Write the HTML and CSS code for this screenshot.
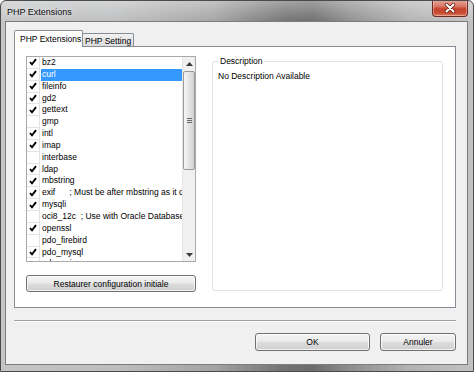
FILE: index.html
```html
<!DOCTYPE html>
<html>
<head>
<meta charset="utf-8">
<link rel="stylesheet" href="styles.css">
</head>
<body>
<div class="window">
  <div class="titlebar">
    <span class="title">PHP Extensions</span>
    <span class="close"><svg width="12" height="10" viewBox="0 0 12 10"><path d="M2.5 1.5 L9.5 8.5 M9.5 1.5 L2.5 8.5" stroke="#5a1a10" stroke-width="3.4" stroke-linecap="round"/><path d="M2.5 1.5 L9.5 8.5 M9.5 1.5 L2.5 8.5" stroke="#fff" stroke-width="2" stroke-linecap="round"/></svg></span>
  </div>
  <div class="client">
    <div class="tabs">
      <div class="tab active">PHP Extensions</div>
      <div class="tab inactive">PHP Setting</div>
    </div>
    <div class="panel">
      <div class="leftcol">
        <div class="list">
          <div class="items">
            <div class="row"><span class="cb"><svg class="chk" viewBox="0 0 8 8"><path d="M1 4 L3 6.3 L7 1.2" /></svg></span><span class="lbl">bz2</span></div>
            <div class="row sel"><span class="cb"><svg class="chk" viewBox="0 0 8 8"><path d="M1 4 L3 6.3 L7 1.2" /></svg></span><span class="lbl">curl</span></div>
            <div class="row"><span class="cb"><svg class="chk" viewBox="0 0 8 8"><path d="M1 4 L3 6.3 L7 1.2" /></svg></span><span class="lbl">fileinfo</span></div>
            <div class="row"><span class="cb"><svg class="chk" viewBox="0 0 8 8"><path d="M1 4 L3 6.3 L7 1.2" /></svg></span><span class="lbl">gd2</span></div>
            <div class="row"><span class="cb"><svg class="chk" viewBox="0 0 8 8"><path d="M1 4 L3 6.3 L7 1.2" /></svg></span><span class="lbl">gettext</span></div>
            <div class="row"><span class="cb"></span><span class="lbl">gmp</span></div>
            <div class="row"><span class="cb"><svg class="chk" viewBox="0 0 8 8"><path d="M1 4 L3 6.3 L7 1.2" /></svg></span><span class="lbl">intl</span></div>
            <div class="row"><span class="cb"><svg class="chk" viewBox="0 0 8 8"><path d="M1 4 L3 6.3 L7 1.2" /></svg></span><span class="lbl">imap</span></div>
            <div class="row"><span class="cb"></span><span class="lbl">interbase</span></div>
            <div class="row"><span class="cb"><svg class="chk" viewBox="0 0 8 8"><path d="M1 4 L3 6.3 L7 1.2" /></svg></span><span class="lbl">ldap</span></div>
            <div class="row"><span class="cb"><svg class="chk" viewBox="0 0 8 8"><path d="M1 4 L3 6.3 L7 1.2" /></svg></span><span class="lbl">mbstring</span></div>
            <div class="row"><span class="cb"><svg class="chk" viewBox="0 0 8 8"><path d="M1 4 L3 6.3 L7 1.2" /></svg></span><span class="lbl">exif      ; Must be after mbstring as it depends on it</span></div>
            <div class="row"><span class="cb"><svg class="chk" viewBox="0 0 8 8"><path d="M1 4 L3 6.3 L7 1.2" /></svg></span><span class="lbl">mysqli</span></div>
            <div class="row"><span class="cb"></span><span class="lbl">oci8_12c  ; Use with Oracle Database 12c Instant Client</span></div>
            <div class="row"><span class="cb"><svg class="chk" viewBox="0 0 8 8"><path d="M1 4 L3 6.3 L7 1.2" /></svg></span><span class="lbl">openssl</span></div>
            <div class="row"><span class="cb"></span><span class="lbl">pdo_firebird</span></div>
            <div class="row"><span class="cb"><svg class="chk" viewBox="0 0 8 8"><path d="M1 4 L3 6.3 L7 1.2" /></svg></span><span class="lbl">pdo_mysql</span></div>
            <div class="row"><span class="cb"></span><span class="lbl">pdo_oci</span></div>
          </div>
          <div class="scrollbar">
            <div class="arrow"><svg width="7" height="4" viewBox="0 0 7 4"><path d="M0 4 L3.5 0 L7 4 Z" fill="#3c3c3c"/></svg></div>
            <div class="thumb"><span class="grip"></span><span class="grip"></span><span class="grip"></span></div>
            <div class="track"></div>
            <div class="arrow"><svg width="7" height="4" viewBox="0 0 7 4"><path d="M0 0 L3.5 4 L7 0 Z" fill="#3c3c3c"/></svg></div>
          </div>
        </div>
        <button class="btn restore">Restaurer configuration initiale</button>
      </div>
      <fieldset class="desc">
        <legend>Description</legend>
        <div class="desctext">No Description Available</div>
      </fieldset>
    </div>
    <div class="sep"></div>
    <div class="actions">
      <button class="btn ok">OK</button>
      <button class="btn cancel">Annuler</button>
    </div>
  </div>
</div>
</body>
</html>
```
FILE: styles.css
```css
html, body {
  margin: 0;
  padding: 0;
  background: #ffffff;
}
body {
  font-family: "Liberation Sans", Arial, sans-serif;
  font-size: 8.5px;
  color: #000;
}
.window {
  width: 474px;
  height: 372px;
  box-sizing: border-box;
  border: 1px solid #4b4b4b;
  border-radius: 6px 6px 0 0;
  background:
    linear-gradient(to bottom, rgba(255,255,255,0.35), rgba(255,255,255,0) 22px),
    linear-gradient(to right, #c3c5c7 0%, #bcbdbe 25%, #a3a3a3 45%, #727272 60%, #6c6c6c 66%, #8e8e8e 74%, #b1b1b1 86%, #c2c2c2 100%);
  padding: 0 5px 6px 4px;
  display: flex;
  flex-direction: column;
  overflow: hidden;
}
.titlebar {
  height: 20px;
  display: flex;
  justify-content: space-between;
  align-items: flex-start;
}
.title {
  font-size: 9px;
  padding: 6px 0 0 2px;
  color: #111;
  text-shadow: 0 0 6px rgba(255,255,255,0.9);
}
.close {
  margin-top: -1px;
  width: 36px;
  height: 17px;
  box-sizing: border-box;
  border: 1px solid #6d2a22;
  border-top: none;
  border-radius: 0 0 4px 4px;
  background: linear-gradient(to bottom, #e9a89d 0%, #d77563 40%, #c7442e 55%, #c84a32 80%, #dc7a5e 100%);
  display: flex;
  align-items: center;
  justify-content: center;
  box-shadow: inset 0 0 0 1px rgba(255,255,255,0.35);
}
.client {
  flex: 1;
  background: #f0f0f0;
  border: 1px solid #7c7c7c;
  display: flex;
  flex-direction: column;
}
.tabs {
  display: flex;
  align-items: flex-end;
  height: 17px;
  margin: 8px 0 -1px 8px;
}
.tab {
  box-sizing: border-box;
  border: 1px solid #898c95;
  border-bottom: none;
  border-radius: 2px 2px 0 0;
  white-space: nowrap;
}
.tab.active {
  position: relative;
  z-index: 1;
  width: 69px;
  height: 17px;
  background: #fff;
  padding: 3px 0 0 5px;
}
.tab.inactive {
  width: 52px;
  height: 13px;
  margin-bottom: 1px;
  margin-left: -1px;
  border-left: none;
  background: linear-gradient(to bottom, #f3f3f3, #e6e6e6 50%, #dcdcdc);
  padding: 2px 0 0 3px;
}
.panel {
  width: 442px;
  height: 262px;
  margin-left: 8px;
  box-sizing: border-box;
  border: 1px solid #898c95;
  background: #fff;
  display: flex;
  padding: 9px 0 0 11px;
  gap: 16px;
}
.leftcol {
  display: flex;
  flex-direction: column;
  width: 170px;
}
.list {
  height: 206px;
  box-sizing: border-box;
  border: 1px solid #a9a9a9;
  display: flex;
  overflow: hidden;
}
.items {
  flex: 1;
  min-width: 0;
  overflow: hidden;
}
.row {
  display: flex;
  height: 11.85px;
}
.cb {
  flex: none;
  width: 13px;
  box-sizing: border-box;
  border-right: 1px solid #e3e3e3;
  border-bottom: 1px solid #e3e3e3;
  display: flex;
  align-items: center;
  justify-content: center;
}
.chk {
  width: 8px;
  height: 8px;
}
.chk path {
  fill: none;
  stroke: #000;
  stroke-width: 1.9;
}
.lbl {
  flex: 1;
  min-width: 0;
  margin-left: 1px;
  padding-left: 1px;
  line-height: 11.85px;
  white-space: pre;
  overflow: hidden;
}
.row.sel .lbl {
  background: #3399ff;
  color: #fff;
}
.scrollbar {
  flex: none;
  width: 13px;
  background: #f0f0f0;
  border-left: 1px solid #e6e6e6;
  display: flex;
  flex-direction: column;
  box-sizing: border-box;
}
.arrow {
  height: 13px;
  display: flex;
  align-items: center;
  justify-content: center;
}
.thumb {
  height: 99px;
  margin: 1px 0 0 0;
  box-sizing: border-box;
  border: 1px solid #9a9a9a;
  border-radius: 2px;
  background: linear-gradient(to right, #f5f5f5, #e4e4e4 50%, #d4d4d4);
  display: flex;
  flex-direction: column;
  align-items: center;
  justify-content: center;
  gap: 1px;
}
.grip {
  width: 5px;
  height: 1px;
  background: #6a6a6a;
}
.track {
  flex: 1;
}
.btn {
  font-family: "Liberation Sans", Arial, sans-serif;
  font-size: 8.5px;
  color: #000;
  box-sizing: border-box;
  border: 1px solid #707070;
  border-radius: 3px;
  background: linear-gradient(to bottom, #f3f3f3 0%, #ebebeb 48%, #dddddd 52%, #cfcfcf 100%);
  box-shadow: inset 0 0 0 1px rgba(255,255,255,0.7);
  padding: 0;
}
.restore {
  margin-top: 13px;
  width: 170px;
  height: 17px;
}
.desc {
  margin: 0;
  padding: 0 5px;
  width: 231px;
  height: 235px;
  box-sizing: border-box;
  border: 1px solid #dde3e8;
  border-radius: 3px;
}
.desc legend {
  padding: 0 1px;
  margin-left: 1px;
  line-height: 11px;
}
.desctext {
  margin-top: 4px;
}
.sep {
  margin: 12px 0 0 8px;
  width: 442px;
  border-top: 1px solid #a0a0a0;
  border-bottom: 1px solid #fff;
}
.actions {
  display: flex;
  justify-content: flex-end;
  gap: 10px;
  width: 450px;
  margin-top: 11px;
}
.ok {
  width: 115px;
  height: 18px;
}
.cancel {
  width: 76px;
  height: 18px;
}
```
